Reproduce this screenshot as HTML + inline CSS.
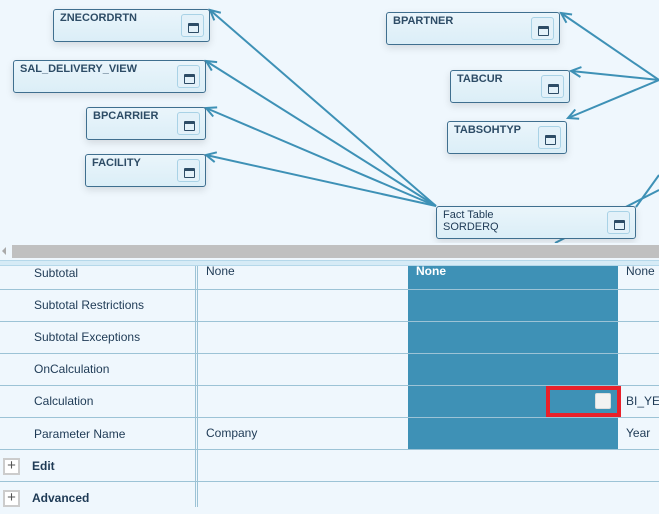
<!DOCTYPE html><html><head><style>
*{margin:0;padding:0;box-sizing:border-box}
body{width:659px;height:507px;overflow:hidden;background:#eff7fd;font-family:"Liberation Sans",sans-serif;position:relative}
.n{position:absolute;height:33px;border:1px solid #3f6f8f;border-radius:3px;background:linear-gradient(#eaf5fb,#dbeef7);box-shadow:0 3px 8px rgba(0,0,0,.12);font-size:11px;font-weight:bold;color:#2d4c66;padding:2px 0 0 6px;line-height:12px}
.n i{position:absolute;right:5px;top:4px;width:23px;height:23px;border:1px solid #a9d2e6;border-radius:3px;background:#e3f1f9}
.n i:after{content:"";position:absolute;left:6px;top:8px;width:9px;height:6px;border:1.5px solid #2d4c66;border-top-width:3px;border-radius:1px}
.r{position:absolute;left:0;width:659px;height:32px;border-bottom:1px solid #9cc3d6;font-size:12px;color:#1e3a55}
.l{position:absolute;left:34px;top:8px}
.v{position:absolute;left:206px;top:5px}
</style></head><body>
<svg width="659" height="245" style="position:absolute;left:0;top:0" stroke="#3e91b6" stroke-width="2" fill="none">
<defs><marker id="a" markerUnits="userSpaceOnUse" markerWidth="14" markerHeight="14" refX="12" refY="7" orient="auto"><path d="M2 2L12 7L2 12" stroke="#3e91b6" stroke-width="2" fill="none"/></marker></defs>
<line x1="436" y1="206" x2="210" y2="10" marker-end="url(#a)"/>
<line x1="436" y1="206" x2="206" y2="61" marker-end="url(#a)"/>
<line x1="436" y1="206" x2="206" y2="108" marker-end="url(#a)"/>
<line x1="436" y1="206" x2="206" y2="155" marker-end="url(#a)"/>
<line x1="659" y1="80" x2="561" y2="13" marker-end="url(#a)"/>
<line x1="659" y1="80" x2="571" y2="71" marker-end="url(#a)"/>
<line x1="659" y1="80" x2="568" y2="118" marker-end="url(#a)"/>
<line x1="636" y1="207" x2="659" y2="175"/>
<line x1="555" y1="243" x2="659" y2="190"/>
</svg>
<div class="n" style="left:53px;top:9px;width:157px">ZNECORDRTN<i></i></div>
<div class="n" style="left:13px;top:60px;width:193px">SAL_DELIVERY_VIEW<i></i></div>
<div class="n" style="left:86px;top:107px;width:120px">BPCARRIER<i></i></div>
<div class="n" style="left:85px;top:154px;width:121px">FACILITY<i></i></div>
<div class="n" style="left:386px;top:12px;width:174px">BPARTNER<i></i></div>
<div class="n" style="left:450px;top:70px;width:120px">TABCUR<i></i></div>
<div class="n" style="left:447px;top:121px;width:120px">TABSOHTYP<i></i></div>
<div class="n" style="left:436px;top:206px;width:200px;font-weight:normal;color:#1e3a55">Fact Table<br>SORDERQ<i></i></div>
<div style="position:absolute;left:0;top:243px;width:659px;height:17px;background:#eff7fd"></div>
<div style="position:absolute;left:12px;top:245px;width:647px;height:13px;background:#c0c0c0"></div>
<div style="position:absolute;left:2px;top:247px;width:0;height:0;border:4px solid transparent;border-right-color:#aaa;border-left:0"></div>
<div style="position:absolute;left:0;top:260px;width:659px;height:6px;background:#d6ebf6;border-top:1px solid #b5d8ea;border-bottom:1px solid #b5d8ea"></div>
<div style="position:absolute;left:408px;top:266px;width:210px;height:184px;background:#3e91b6"></div>
<div class="r" style="top:258px"><span class="l" style="top:8px">Subtotal</span><span class="v" style="top:6px">None</span><span style="position:absolute;left:416px;top:6px;color:#fff;font-weight:bold">None</span><span style="position:absolute;left:626px;top:6px">None</span></div>
<div class="r" style="top:290px"><span class="l">Subtotal Restrictions</span></div>
<div class="r" style="top:322px"><span class="l">Subtotal Exceptions</span></div>
<div class="r" style="top:354px"><span class="l">OnCalculation</span></div>
<div class="r" style="top:386px"><span class="l">Calculation</span><span style="position:absolute;left:626px;top:8px">BI_YE</span></div>
<div class="r" style="top:418px"><span class="l" style="top:9px">Parameter Name</span><span class="v" style="top:8px">Company</span><span style="position:absolute;left:626px;top:8px">Year</span></div>
<div class="r" style="top:450px"><span style="position:absolute;left:3px;top:8px;width:17px;height:17px;border:2px solid #ccc;background:#fff;text-align:center;line-height:12px;font-size:15px;color:#555">+</span><span class="l" style="left:32px;top:9px;font-weight:bold">Edit</span></div>
<div class="r" style="top:482px;border:0"><span style="position:absolute;left:3px;top:8px;width:17px;height:17px;border:2px solid #ccc;background:#fff;text-align:center;line-height:12px;font-size:15px;color:#555">+</span><span class="l" style="left:32px;top:9px;font-weight:bold">Advanced</span></div>
<div style="position:absolute;left:195px;top:266px;width:3px;height:241px;border-left:1px solid #9cc3d6;border-right:1px solid #9cc3d6"></div>
<div style="position:absolute;left:546px;top:386px;width:75px;height:31px;border:4px solid #e8202a"></div>
<div style="position:absolute;left:595px;top:393px;width:16px;height:16px;background:#f2f2f2;border:1px solid #ddd;border-radius:2px"></div>
</body></html>
